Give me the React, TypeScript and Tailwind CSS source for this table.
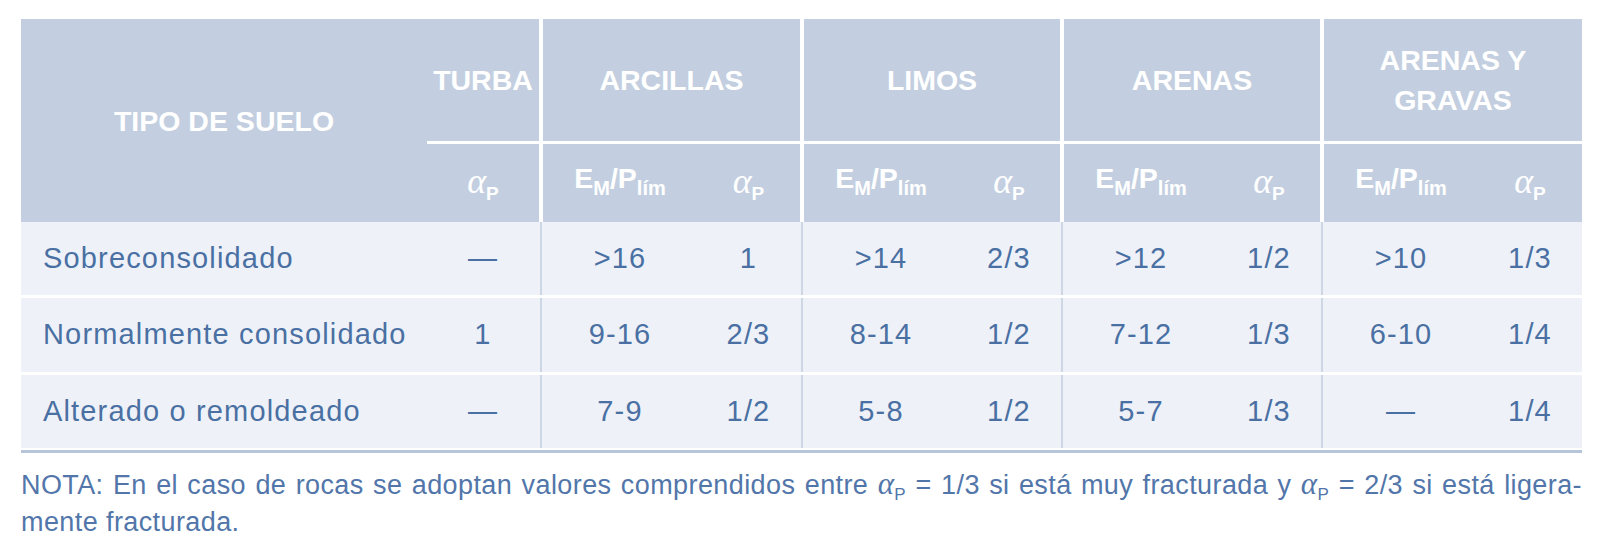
const groups = [
  { name: ["ARCILLAS"], w: "w-[261px]" },
  { name: ["LIMOS"], w: "w-[260px]" },
  { name: ["ARENAS"], w: "w-[260px]" },
  { name: ["ARENAS Y", "GRAVAS"], w: "w-[262px]" },
];

const rows = [
  {
    label: "Sobreconsolidado",
    turba: "—",
    h: "h-[73px]",
    vals: [
      [">16", "1"],
      [">14", "2/3"],
      [">12", "1/2"],
      [">10", "1/3"],
    ],
  },
  {
    label: "Normalmente consolidado",
    turba: "1",
    h: "h-[74px]",
    vals: [
      ["9-16", "2/3"],
      ["8-14", "1/2"],
      ["7-12", "1/3"],
      ["6-10", "1/4"],
    ],
  },
  {
    label: "Alterado o remoldeado",
    turba: "—",
    h: "h-[73px]",
    vals: [
      ["7-9", "1/2"],
      ["5-8", "1/2"],
      ["5-7", "1/3"],
      ["—", "1/4"],
    ],
  },
];

function Alpha({ small = false }: { small?: boolean }) {
  return (
    <span className="whitespace-nowrap leading-none">
      <i
        className={`font-['Liberation_Serif',serif] font-normal leading-none ${
          small ? "text-[31px]" : "text-[36px]"
        }`}
      >
        α
      </i>
      <span className={`align-sub leading-none ${small ? "text-[17px]" : "text-[19px]"}`}>P</span>
    </span>
  );
}

function Ratio() {
  return (
    <span className="whitespace-nowrap">
      E<span className="align-sub text-[20px]">M</span>/P
      <span className="align-sub text-[20px]">lím</span>
    </span>
  );
}

export default function App() {
  return (
    <div className="min-h-screen bg-white pl-[21px] pr-[18px] pt-[19px] font-['Liberation_Sans',Arial,sans-serif]">
      <div className="w-[1561px]">
        {/* header */}
        <div className="flex bg-[#c3cfe0] text-[28.5px] font-bold leading-[40px] text-white">
          <div className="flex h-[203px] w-[406px] items-center justify-center">
            TIPO DE SUELO
          </div>
          <div className="flex w-[112px] flex-col">
            <div className="flex h-[122px] items-center justify-center">TURBA</div>
            <div className="h-[3px] bg-white" />
            <div className="flex h-[78px] items-center justify-center">
              <Alpha />
            </div>
          </div>
          {groups.map((g) => (
            <div key={g.name.join(" ")} className={`flex flex-col border-l-4 border-white ${g.w}`}>
              <div className="flex h-[122px] flex-col items-center justify-center">
                {g.name.map((n) => (
                  <span key={n}>{n}</span>
                ))}
              </div>
              <div className="h-[3px] bg-white" />
              <div className="flex h-[78px] items-center">
                <div className="w-[154px] text-center">
                  <Ratio />
                </div>
                <div className="flex-1 text-center">
                  <Alpha />
                </div>
              </div>
            </div>
          ))}
        </div>

        {/* body */}
        <div className="flex flex-col gap-[3px] bg-white text-[29px] tracking-[0.04em] text-[#4a70a3]">
          {rows.map((r) => (
            <div key={r.label} className={`flex items-stretch bg-[#eef2f8] ${r.h}`}>
              <div className="flex w-[406px] items-center pl-[22px]">{r.label}</div>
              <div className="flex w-[112px] items-center justify-center">{r.turba}</div>
              {r.vals.map((v, i) => (
                <div key={i} className={`flex ${groups[i].w}`}>
                  <div className="flex w-[4px] justify-center">
                    <div className="w-[2px] bg-[#ccd6e4]" />
                  </div>
                  <div className="flex w-[154px] items-center justify-center">{v[0]}</div>
                  <div className="flex flex-1 items-center justify-center">{v[1]}</div>
                </div>
              ))}
            </div>
          ))}
        </div>
        <div className="mt-[2px] h-[3px] bg-[#b6c5d9]" />
      </div>

      {/* note */}
      <div className="mt-[14px] w-[1561px] text-[27px] leading-[37px] tracking-[0.015em] text-[#5276aa]">
        <p className="h-[37px] whitespace-nowrap text-justify [text-align-last:justify]">
          NOTA: En el caso de rocas se adoptan valores comprendidos entre <Alpha small /> = 1/3 si
          está muy fracturada y <Alpha small /> = 2/3 si está ligera-
        </p>
        <p>mente fracturada.</p>
      </div>
    </div>
  );
}
